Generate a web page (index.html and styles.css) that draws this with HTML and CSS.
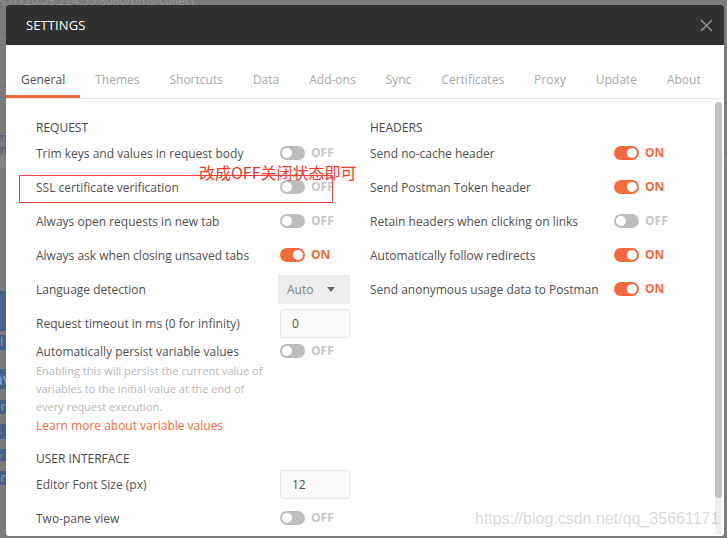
FILE: index.html
```html
<!DOCTYPE html>
<html lang="en">
<head>
<meta charset="utf-8">
<title>Settings</title>
<link rel="stylesheet" href="styles.css">
</head>
<body>
<div class="app-bg">
  <div class="bg-url">s://120.53.224.55:8080/bms/collect</div>
  <div class="bg-line bg-line-1"></div>
  <div class="bg-line bg-line-2"></div>
  <div class="bg-m bg-m1">m</div>
  <div class="bg-m">m</div>
  <div class="bg-band"></div>
  <div class="bg-line bg-line-3"></div>
  <div class="bg-block bg-big">t</div>
  <div class="bg-block bg-b2">ti</div>
  <div class="bg-block bg-b3">av</div>
  <div class="bg-block bg-b4">er</div>
  <div class="bg-block bg-b5">fi</div>
  <div class="bg-block bg-b6">o</div>
  <div class="bg-block bg-b7">ar</div>
</div>

<div class="modal">
  <div class="modal-header">
    <span class="title">SETTINGS</span>
    <svg class="close" width="13" height="13" viewBox="0 0 13 13" aria-hidden="true">
      <path d="M1 1 L12 12 M12 1 L1 12" stroke="#8c8c8c" stroke-width="1.7" fill="none"/>
    </svg>
  </div>
  <nav class="tabs">
    <span class="tab active">General</span>
    <span class="tab">Themes</span>
    <span class="tab">Shortcuts</span>
    <span class="tab">Data</span>
    <span class="tab">Add-ons</span>
    <span class="tab">Sync</span>
    <span class="tab">Certificates</span>
    <span class="tab">Proxy</span>
    <span class="tab">Update</span>
    <span class="tab">About</span>
  </nav>
  <div class="modal-body">
    <div class="content">
      <div class="col">
        <div class="section-title">REQUEST</div>
        <div class="row"><span class="label">Trim keys and values in request body</span><span class="switch off"><span class="toggle"><span class="knob"></span></span><span class="state">OFF</span></span></div>
        <div class="row"><span class="label">SSL certificate verification</span><span class="switch off"><span class="toggle"><span class="knob"></span></span><span class="state">OFF</span></span></div>
        <div class="row"><span class="label">Always open requests in new tab</span><span class="switch off"><span class="toggle"><span class="knob"></span></span><span class="state">OFF</span></span></div>
        <div class="row"><span class="label">Always ask when closing unsaved tabs</span><span class="switch on"><span class="toggle"><span class="knob"></span></span><span class="state">ON</span></span></div>
        <div class="row"><span class="label">Language detection</span><span class="select"><span>Auto</span><span class="caret"></span></span></div>
        <div class="row"><span class="label">Request timeout in ms (0 for infinity)</span><span class="input">0</span></div>
        <div class="persist">
          <div class="persist-row"><span class="label">Automatically persist variable values</span><span class="switch off"><span class="toggle"><span class="knob"></span></span><span class="state">OFF</span></span></div>
          <div class="desc">Enabling this will persist the current value of variables to the initial value at the end of every request execution.</div>
          <div class="link">Learn more about variable values</div>
        </div>
        <div class="section-title ui-title">USER INTERFACE</div>
        <div class="row"><span class="label">Editor Font Size (px)</span><span class="input">12</span></div>
        <div class="row"><span class="label">Two-pane view</span><span class="switch off"><span class="toggle"><span class="knob"></span></span><span class="state">OFF</span></span></div>
      </div>
      <div class="col">
        <div class="section-title">HEADERS</div>
        <div class="row"><span class="label">Send no-cache header</span><span class="switch on"><span class="toggle"><span class="knob"></span></span><span class="state">ON</span></span></div>
        <div class="row"><span class="label">Send Postman Token header</span><span class="switch on"><span class="toggle"><span class="knob"></span></span><span class="state">ON</span></span></div>
        <div class="row"><span class="label">Retain headers when clicking on links</span><span class="switch off"><span class="toggle"><span class="knob"></span></span><span class="state">OFF</span></span></div>
        <div class="row"><span class="label">Automatically follow redirects</span><span class="switch on"><span class="toggle"><span class="knob"></span></span><span class="state">ON</span></span></div>
        <div class="row"><span class="label">Send anonymous usage data to Postman</span><span class="switch on"><span class="toggle"><span class="knob"></span></span><span class="state">ON</span></span></div>
      </div>
    </div>
    <div class="scrollbar"><div class="thumb"></div></div>
  </div>
</div>

<div class="note-box"></div>
<div class="note-text">改成OFF关闭状态即可</div>
<div class="watermark">https://blog.csdn.net/qq_35661171</div>
</body>
</html>
```

FILE: styles.css
```css
html, body {
  margin: 0;
  padding: 0;
}
body {
  width: 727px;
  height: 538px;
  overflow: hidden;
  position: relative;
  background: #7b7b7b;
  font-family: "Open Sans", "Noto Sans", sans-serif;
}

/* dimmed application behind the modal */
.app-bg {
  width: 727px;
  height: 538px;
  overflow: hidden;
}
.bg-url {
  font-size: 12px;
  line-height: 12px;
  margin-top: -5px;
  color: #989898;
  white-space: nowrap;
}
.bg-line {
  height: 1px;
  background: #727272;
}
.bg-line-1 { margin-top: 26px; }
.bg-line-2 { margin-top: 53px; }
.bg-m {
  font-size: 12px;
  line-height: 12px;
  color: #5a4f8a;
  margin-left: -4px;
}
.bg-m1 { margin-top: 44px; }
.bg-band {
  height: 12px;
  background: #838383;
}
.bg-line-3 { margin-top: 60px; }
.bg-block {
  width: 40px;
  background: #46618a;
  color: #8ea3c4;
  font-size: 12px;
  line-height: 14px;
  margin-left: -2px;
  overflow: hidden;
}
.bg-big { margin-top: 62px; height: 40px; font-size: 40px; line-height: 40px; margin-left: -14px; }
.bg-b2 { margin-top: 4px; height: 15px; margin-left: -4px; }
.bg-b3 { margin-top: 19px; height: 20px; font-size: 16px; line-height: 20px; margin-left: -6px; }
.bg-b4 { margin-top: 11px; height: 14px; margin-left: -6px; }
.bg-b5 { margin-top: 10px; height: 15px; margin-left: -6px; }
.bg-b6 { margin-top: 10px; height: 12px; margin-left: -6px; }
.bg-b7 { margin-top: 10px; height: 14px; margin-left: -6px; }

/* modal */
.modal {
  position: absolute;
  left: 6px;
  top: 5px;
  width: 718px;
  height: 531px;
  background: #ffffff;
  border-radius: 3px;
  overflow: hidden;
  display: flex;
  flex-direction: column;
}
.modal-header {
  flex: none;
  height: 40px;
  background: #303030;
  display: flex;
  align-items: center;
  justify-content: space-between;
  padding: 0 11px 0 20px;
}
.title {
  color: #ffffff;
  font-size: 13px;
  letter-spacing: 0.1px;
}
.close { display: block; }

.tabs {
  flex: none;
  display: flex;
  border-bottom: 1px solid #e4e4e4;
}
.tab {
  flex: none;
  padding: 26px 15px 6px;
  line-height: 18px;
  font-size: 12px;
  color: #a6a6a6;
  white-space: nowrap;
  border-bottom: 3px solid transparent;
}
.tab.active {
  color: #505050;
  border-bottom-color: #f26b3a;
}

.modal-body {
  flex: 1;
  min-height: 0;
  display: flex;
}
.content {
  flex: 1;
  padding: 20px 0 0 30px;
  display: grid;
  grid-template-columns: 334px 334px;
  align-content: start;
  overflow: hidden;
}
.col {
  display: flex;
  flex-direction: column;
}
.section-title {
  font-size: 12px;
  line-height: 17px;
  color: #474747;
}
.ui-title { margin-top: 15px; }

.row {
  height: 34px;
  display: flex;
  align-items: center;
}
.label {
  flex: none;
  width: 244px;
  font-size: 12px;
  color: #505050;
  white-space: nowrap;
}

.switch {
  display: flex;
  align-items: center;
  gap: 6px;
}
.toggle {
  width: 25px;
  height: 14px;
  border-radius: 7px;
  box-sizing: border-box;
  padding: 2px;
  display: flex;
  align-items: center;
}
.knob {
  width: 10px;
  height: 10px;
  border-radius: 50%;
  background: #ffffff;
}
.switch.on .toggle {
  background: #f26b3a;
  justify-content: flex-end;
}
.switch.off .toggle {
  background: #bdbdbd;
  justify-content: flex-start;
}
.state {
  font-size: 12px;
  font-weight: 700;
  line-height: 14px;
}
.switch.on .state { color: #f26b3a; }
.switch.off .state { color: #c6c6c6; }

.select {
  width: 72px;
  height: 29px;
  margin-left: -2px;
  box-sizing: border-box;
  background: #ececec;
  display: flex;
  align-items: center;
  justify-content: space-between;
  padding: 0 15px 0 9px;
  font-size: 12px;
  color: #808080;
}
.caret {
  width: 0;
  height: 0;
  border-left: 4px solid transparent;
  border-right: 4px solid transparent;
  border-top: 5px solid #6a6a6a;
}
.input {
  width: 70px;
  height: 29px;
  box-sizing: border-box;
  border: 1px solid #e6e6e6;
  border-radius: 3px;
  background: #fbfbfb;
  padding-left: 11px;
  display: flex;
  align-items: center;
  font-size: 12px;
  color: #505050;
}

.persist { padding-top: 2px; }
.persist-row {
  height: 18px;
  display: flex;
  align-items: center;
}
.desc {
  margin-top: 2px;
  width: 232px;
  font-size: 11px;
  line-height: 18px;
  color: #b6b6b6;
}
.link {
  margin-top: 1px;
  font-size: 12px;
  line-height: 18px;
  color: #f26b3a;
}

.scrollbar {
  flex: none;
  width: 7px;
  margin: 3px 2px 1px 0;
  background: #efefef;
  border-radius: 3px;
  display: flex;
  flex-direction: column;
}
.thumb {
  height: 396px;
  background: #c2c2c2;
  border-radius: 3px;
}

/* annotation overlays */
.note-box {
  position: absolute;
  left: 19px;
  top: 175px;
  width: 314px;
  height: 28px;
  box-sizing: border-box;
  border: 1px solid #e8443a;
}
.note-text {
  position: absolute;
  left: 199px;
  top: 162px;
  font-family: "Noto Sans CJK SC", "Noto Sans", sans-serif;
  font-size: 16px;
  line-height: 20px;
  color: #f0392b;
  white-space: nowrap;
}
.watermark {
  position: absolute;
  left: 475px;
  top: 509px;
  font-family: "Liberation Sans", Arial, sans-serif;
  font-size: 16px;
  line-height: 20px;
  color: rgba(190, 190, 190, 0.6);
  white-space: nowrap;
}
```
